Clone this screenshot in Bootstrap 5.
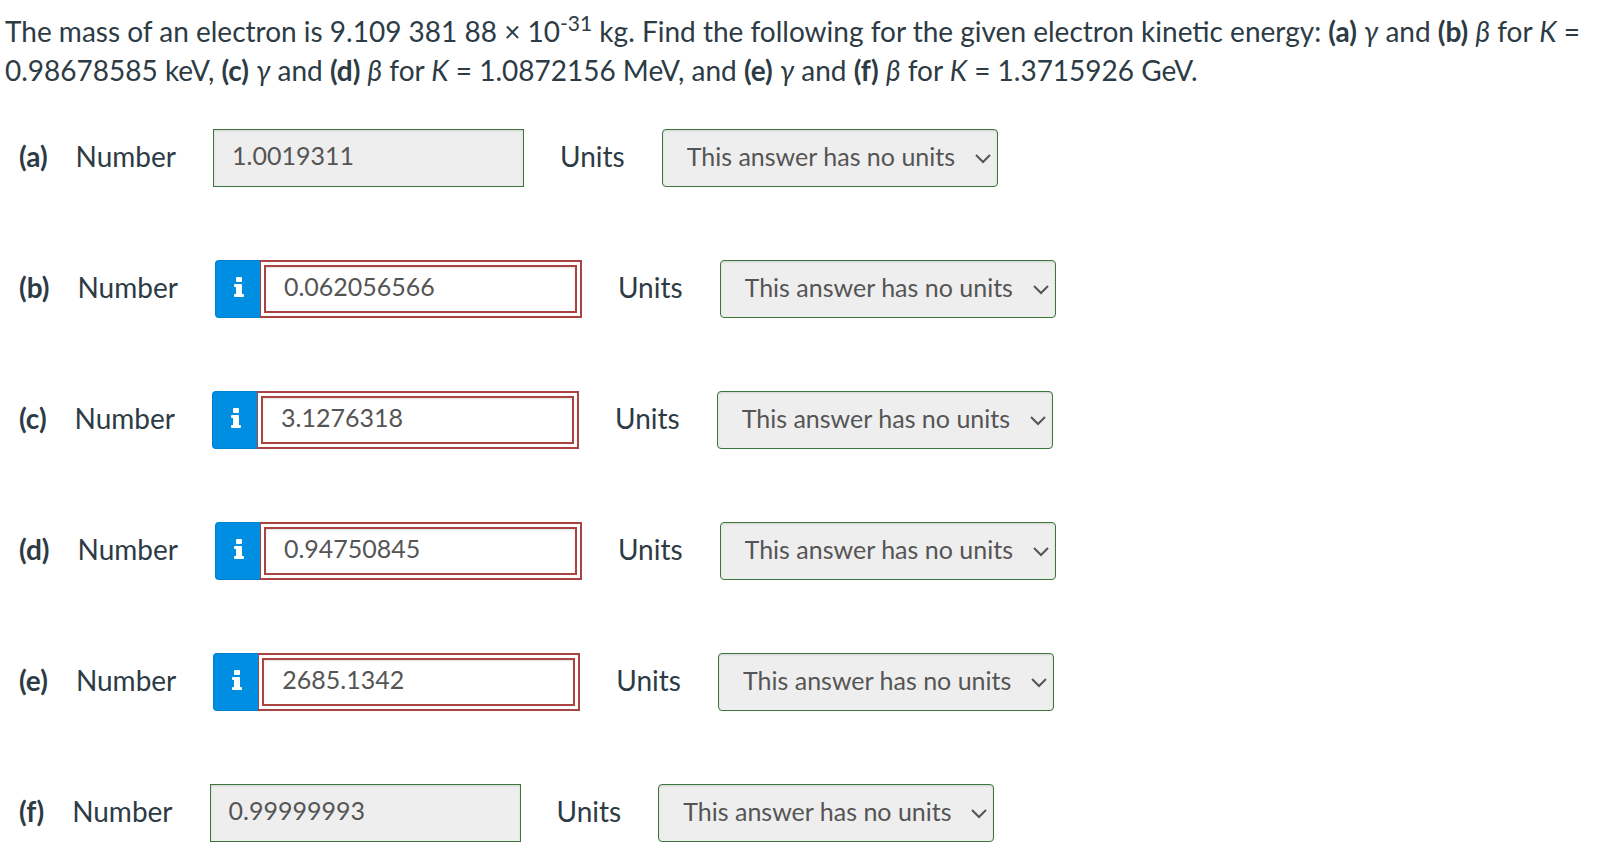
<!DOCTYPE html>
<html lang="en">
<head>
<meta charset="utf-8">
<meta name="viewport" content="width=device-width, initial-scale=1">
<title>Electron kinetic energy</title>
<link href="https://cdn.jsdelivr.net/npm/bootstrap@5.3.0/dist/css/bootstrap.min.css" rel="stylesheet">
<style>
  body { font-family: Lato, "Liberation Sans", sans-serif; font-size: 28px; line-height: 39px; color: #2d3b45; background: #fff; }
  .question { padding: 12px 5px 0; margin-bottom: 39px; }
  sup { font-size: 21px; top: -11px; }
  b { font-weight: 700; }
  .answers { gap: 73px; padding: 0 19px 24px; }
  .part { min-height: 58px; }
  .part-name, .number-label, .units-label { padding-bottom: 4px; }
  .part-name { margin-right: 28px; }
  .number-label { margin-right: 37px; }
  .units-label { margin: 0 37px 0 36px; }
  .answer-group { width: auto; }
  .answer-group .form-control, .units-select { height: 58px; font-size: 25px; line-height: 36px; color: #555; border-radius: 0; box-shadow: inset 0 1px 2px rgba(0,0,0,.12); }
  .answer-group .form-control { flex: none; width: 311px; padding: 6px 18px 12px; }
  .answer-group .form-control.right, .units-select.form-select { background-color: #eee; border: 1px solid #3c763d; }
  .answer-group .form-control.wrong { width: 323px; background: #fff; border: 7px double #a94442; padding: 0 18px 6px; }
  .units-select.form-select { width: 336px; padding: 8px 40px 12px 24px; border-radius: 4px;
    background-image: url("data:image/svg+xml,%3Csvg xmlns='http://www.w3.org/2000/svg' viewBox='0 0 16 10'%3E%3Cpath d='M1 1l7 7 7-7' fill='none' stroke='%23555' stroke-width='2'/%3E%3C/svg%3E");
    background-size: 16px 10px; background-position: right 6px top 24px; }
  .info-btn.btn { width: 45px; padding: 0 0 0 2px; color: #fff; background: #008ee2; border: 1px solid #0081cd; border-right: 0; border-radius: 4px 0 0 4px; }
  .info-btn svg { display: block; margin: 0 auto 4px; }
</style>
</head>
<body>
<main>
  <p class="question">The mass of an electron is 9.109 381 88 × 10<sup>-31</sup> kg. Find the following for the given electron kinetic energy: <b>(a)</b> <i>γ</i> and <b>(b)</b> <i>β</i> for <i>K</i> = 0.98678585 keV, <b>(c)</b> <i>γ</i> and <b>(d)</b> <i>β</i> for <i>K</i> = 1.0872156 MeV, and <b>(e)</b> <i>γ</i> and <b>(f)</b> <i>β</i> for <i>K</i> = 1.3715926 GeV.</p>
  <form class="answers d-flex flex-column">
    <div class="part d-flex align-items-center">
      <b class="part-name">(a)</b>
      <label class="number-label" for="num-a">Number</label>
      <div class="input-group answer-group"><input class="form-control right" id="num-a" type="text" value="1.0019311" readonly></div>
      <label class="units-label" for="unit-a">Units</label>
      <select class="form-select units-select" id="unit-a"><option>This answer has no units</option></select>
    </div>
    <div class="part d-flex align-items-center">
      <b class="part-name">(b)</b>
      <label class="number-label" for="num-b">Number</label>
      <div class="input-group answer-group">
        <button class="btn info-btn" type="button" aria-label="Information"><svg width="10" height="20" viewBox="0 0 10 20" fill="currentColor" aria-hidden="true"><path d="M3 0h4q1 0 1 1v3q0 1-1 1H3q-1 0-1-1V1q0-1 1-1zM1 7h6q1 0 1 1v9h1q1 0 1 1v1q0 1-1 1H1q-1 0-1-1v-1q0-1 1-1h1v-7H1q-1 0-1-1V8q0-1 1-1z"/></svg></button>
        <input class="form-control wrong" id="num-b" type="text" value="0.062056566">
      </div>
      <label class="units-label" for="unit-b">Units</label>
      <select class="form-select units-select" id="unit-b"><option>This answer has no units</option></select>
    </div>
    <div class="part d-flex align-items-center">
      <b class="part-name">(c)</b>
      <label class="number-label" for="num-c">Number</label>
      <div class="input-group answer-group">
        <button class="btn info-btn" type="button" aria-label="Information"><svg width="10" height="20" viewBox="0 0 10 20" fill="currentColor" aria-hidden="true"><path d="M3 0h4q1 0 1 1v3q0 1-1 1H3q-1 0-1-1V1q0-1 1-1zM1 7h6q1 0 1 1v9h1q1 0 1 1v1q0 1-1 1H1q-1 0-1-1v-1q0-1 1-1h1v-7H1q-1 0-1-1V8q0-1 1-1z"/></svg></button>
        <input class="form-control wrong" id="num-c" type="text" value="3.1276318">
      </div>
      <label class="units-label" for="unit-c">Units</label>
      <select class="form-select units-select" id="unit-c"><option>This answer has no units</option></select>
    </div>
    <div class="part d-flex align-items-center">
      <b class="part-name">(d)</b>
      <label class="number-label" for="num-d">Number</label>
      <div class="input-group answer-group">
        <button class="btn info-btn" type="button" aria-label="Information"><svg width="10" height="20" viewBox="0 0 10 20" fill="currentColor" aria-hidden="true"><path d="M3 0h4q1 0 1 1v3q0 1-1 1H3q-1 0-1-1V1q0-1 1-1zM1 7h6q1 0 1 1v9h1q1 0 1 1v1q0 1-1 1H1q-1 0-1-1v-1q0-1 1-1h1v-7H1q-1 0-1-1V8q0-1 1-1z"/></svg></button>
        <input class="form-control wrong" id="num-d" type="text" value="0.94750845">
      </div>
      <label class="units-label" for="unit-d">Units</label>
      <select class="form-select units-select" id="unit-d"><option>This answer has no units</option></select>
    </div>
    <div class="part d-flex align-items-center">
      <b class="part-name">(e)</b>
      <label class="number-label" for="num-e">Number</label>
      <div class="input-group answer-group">
        <button class="btn info-btn" type="button" aria-label="Information"><svg width="10" height="20" viewBox="0 0 10 20" fill="currentColor" aria-hidden="true"><path d="M3 0h4q1 0 1 1v3q0 1-1 1H3q-1 0-1-1V1q0-1 1-1zM1 7h6q1 0 1 1v9h1q1 0 1 1v1q0 1-1 1H1q-1 0-1-1v-1q0-1 1-1h1v-7H1q-1 0-1-1V8q0-1 1-1z"/></svg></button>
        <input class="form-control wrong" id="num-e" type="text" value="2685.1342">
      </div>
      <label class="units-label" for="unit-e">Units</label>
      <select class="form-select units-select" id="unit-e"><option>This answer has no units</option></select>
    </div>
    <div class="part d-flex align-items-center">
      <b class="part-name">(f)</b>
      <label class="number-label" for="num-f">Number</label>
      <div class="input-group answer-group"><input class="form-control right" id="num-f" type="text" value="0.99999993" readonly></div>
      <label class="units-label" for="unit-f">Units</label>
      <select class="form-select units-select" id="unit-f"><option>This answer has no units</option></select>
    </div>
  </form>
</main>
<script src="https://cdn.jsdelivr.net/npm/bootstrap@5.3.0/dist/js/bootstrap.bundle.min.js"></script>
</body>
</html>
